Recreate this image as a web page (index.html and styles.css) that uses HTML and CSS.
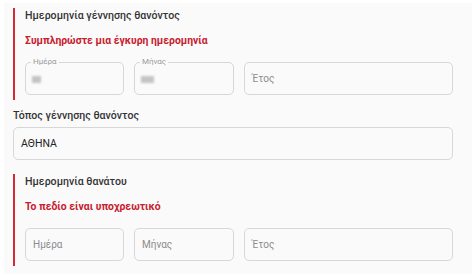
FILE: index.html
```html
<!DOCTYPE html>
<html lang="el">
<head>
<meta charset="utf-8">
<link rel="stylesheet" href="styles.css">
</head>
<body>
<div class="form">
  <div class="section error">
    <div class="label">Ημερομηνία γέννησης θανόντος</div>
    <div class="err">Συμπληρώστε μια έγκυρη ημερομηνία</div>
    <div class="date-row">
      <div class="field"><span class="float">Ημέρα</span><span class="blur b1"></span></div>
      <div class="field"><span class="float">Μήνας</span><span class="blur b2"></span></div>
      <div class="field"><span class="ph">Έτος</span></div>
    </div>
  </div>
  <div class="section plain">
    <div class="label">Τόπος γέννησης θανόντος</div>
    <div class="field wide"><span class="value">ΑΘΗΝΑ</span></div>
  </div>
  <div class="section error last">
    <div class="label">Ημερομηνία θανάτου</div>
    <div class="err">Το πεδίο είναι υποχρεωτικό</div>
    <div class="date-row">
      <div class="field"><span class="ph">Ημέρα</span></div>
      <div class="field"><span class="ph">Μήνας</span></div>
      <div class="field"><span class="ph">Έτος</span></div>
    </div>
  </div>
</div>
</body>
</html>
```
FILE: styles.css
```css
html, body {
  margin: 0;
  padding: 0;
  background: #ffffff;
}
body {
  font-family: Roboto, "Noto Sans", sans-serif;
  width: 474px;
  height: 274px;
  overflow: hidden;
}
.form {
  margin: 3px 2px 0 4px;
  height: 271px;
  background: #fafafa;
  padding: 5px 19px 0 9px;
  box-sizing: border-box;
}
.section.error {
  border-left: 2px solid #d42a35;
  padding: 0 0 5px 10px;
}
.section.plain {
  margin-top: 8px;
  margin-bottom: 14px;
}
.label {
  font-size: 10.6px;
  line-height: 16px;
  font-weight: 500;
  color: #333333;
}
.err {
  margin-top: 9px;
  font-size: 10.4px;
  line-height: 16px;
  font-weight: 700;
  color: #c8202e;
}
.date-row {
  margin-top: 13px;
  display: grid;
  grid-template-columns: 99px 100px 1fr;
  column-gap: 10px;
}
.field {
  position: relative;
  height: 33px;
  box-sizing: border-box;
  border: 1px solid #d7d7d7;
  border-radius: 5px;
  background: #fafafa;
  display: flex;
  align-items: center;
  padding-left: 7px;
}
.wide {
  margin-top: 3px;
  padding-left: 7px;
}
.float {
  position: absolute;
  top: -6px;
  left: 5px;
  padding: 0 2px;
  background: #fafafa;
  font-size: 8px;
  line-height: 10px;
  color: #9a9a9a;
}
.blur {
  display: block;
  height: 7px;
  background: #c4c4c4;
  filter: blur(0.8px);
  margin-top: 2px;
}
.b1 { width: 9px; margin-left: -1px; }
.b2 { width: 13px; margin-left: -1px; }
.ph {
  font-family: Roboto, sans-serif;
  font-size: 10px;
  color: #8c8c8c;
}
.value {
  font-size: 10.5px;
  color: #222222;
}
```
